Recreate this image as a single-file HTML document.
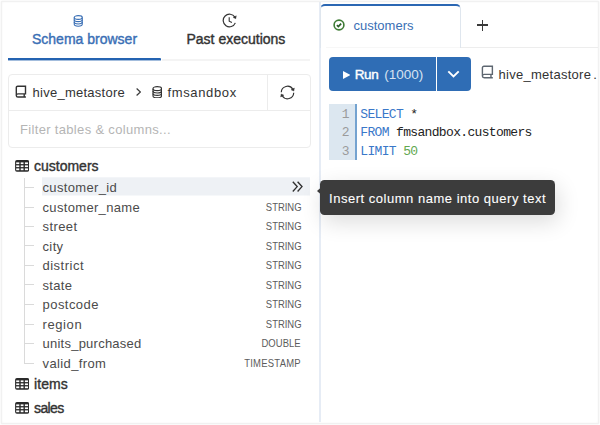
<!DOCTYPE html>
<html><head><meta charset="utf-8">
<style>
html,body{margin:0;padding:0;}
body{width:600px;height:425px;overflow:hidden;background:#fff;font-family:"Liberation Sans",sans-serif;color:#3a3a3a;position:relative;}
.abs{position:absolute;}
#frame{left:1px;top:1px;right:1px;bottom:1px;border:1px solid #f1f1f1;box-shadow:0 0 1.500px #ececec, inset 0 0 1.500px #ececec;z-index:50;pointer-events:none;}
.t{position:absolute;white-space:nowrap;line-height:1;font-size:14px;}
.sb{-webkit-text-stroke:0.4px currentColor;}
#vdiv{left:319px;top:2px;width:2px;height:420px;background:#e6ecf5;}
#ul1{left:8px;top:58px;width:153.300px;height:2px;background:#2463b1;border-bottom:1px solid #a3bddd;border-radius:0 1px 1px 0}
#ul2{left:162px;top:59px;width:148px;height:2px;background:#f4f4f4;}
#dbbox{left:7.500px;top:73.500px;width:301.500px;height:72.500px;border:1.300px solid #ececec;border-radius:4px;}
#dbsep{left:267px;top:74.500px;width:1.300px;height:35px;background:#ececec;}
#filter{left:8px;top:109.500px;width:301.500px;height:1.300px;background:#ececec;}
.row{position:absolute;left:42.500px;font-size:14px;color:#4b4b4b;white-space:nowrap;line-height:1;}
.typ{position:absolute;right:298.900px;font-size:11px;color:#5c5c5c;white-space:nowrap;line-height:1;transform:scaleX(0.860);transform-origin:100% 50%;}
.tick{position:absolute;left:24px;width:9.500px;height:1px;background:#dadada;}
.tbl{position:absolute;left:34px;font-size:14px;color:#333;line-height:1;white-space:nowrap;-webkit-text-stroke:0.38px #333;}
.code{font-family:"Liberation Mono",monospace;font-size:13px;letter-spacing:-0.660px;}
</style></head><body>
<div class="abs" id="vdiv"></div>

<!-- left tabs -->
<svg class="abs" style="left:72.800px;top:14.800px" width="10.500" height="11.900" viewBox="0 0 10.500 12.600" fill="none" stroke="#3a6fb5" stroke-width="1.150"><ellipse cx="5.250" cy="2.650" rx="4.250" ry="1.950"/><path d="M1 2.650V9.900c0 1.080 1.900 1.950 4.250 1.950s4.250-0.870 4.250-1.950V2.650"/><path d="M1 5.100c0 1.080 1.900 1.950 4.250 1.950s4.250-0.870 4.250-1.950"/><path d="M1 7.500c0 1.080 1.900 1.950 4.250 1.950s4.250-0.870 4.250-1.950"/></svg>
<div class="t sb" id="tab1" style="left:32px;top:31.900px;color:#3a6fb5;">Schema browser</div>
<svg class="abs" style="left:221.800px;top:13.450px" width="15" height="15" viewBox="0 0 15 15" fill="none" stroke="#333" stroke-width="1.200"><path d="M12.840 4.160A6.300 6.300 0 1 0 13.340 9.860"/><path d="M7.200 4.200V8.200L9.900 9.600" stroke-width="1.100"/><path d="M13.800 5.700l0.500-2.900-3.100 1.700z" fill="#333" stroke-width="0.400"/></svg>
<div class="t sb" id="tab2" style="left:186.500px;top:31.900px;color:#333;">Past executions</div>
<div class="abs" id="ul1"></div><div class="abs" id="ul2"></div>

<!-- db selector -->
<div class="abs" id="dbbox"></div><div class="abs" id="dbsep"></div>
<svg class="abs" style="left:15px;top:85.300px" width="12" height="13.500" viewBox="0 0 12 13.500" fill="none" stroke="#333" stroke-width="1.400"><path d="M1.300 10.600V2.600a1.400 1.400 0 0 1 1.400-1.400H10.500V8.900H3a1.700 1.550 0 0 0 0 3.100H10.900M9.200 8.900V12"/></svg>
<div class="t" id="hm" style="font-size:13px;letter-spacing:0.260px;left:32.500px;top:85.750px;color:#333">hive_metastore</div>
<svg class="abs" id="gt" style="left:136.300px;top:88.100px" width="5.200" height="8" viewBox="0 0 5.200 8" fill="none" stroke="#3a3a3a" stroke-width="1.200"><path d="M0.600 0.500l3.800 3.500-3.800 3.500"/></svg>
<svg class="abs" style="left:151.9px;top:85.5px" width="10.5" height="12.6" viewBox="0 0 10.500 12.600" fill="none" stroke="#333" stroke-width="1.150"><ellipse cx="5.250" cy="2.650" rx="4.250" ry="1.950"/><path d="M1 2.650V9.900c0 1.080 1.900 1.950 4.250 1.950s4.250-0.870 4.250-1.950V2.650"/><path d="M1 5.100c0 1.080 1.900 1.950 4.250 1.950s4.250-0.870 4.250-1.950"/><path d="M1 7.500c0 1.080 1.900 1.950 4.250 1.950s4.250-0.870 4.250-1.950"/></svg>
<div class="t" id="fm" style="font-size:13px;letter-spacing:0.630px;left:167.500px;top:85.750px;color:#333">fmsandbox</div>
<svg class="abs" style="left:280.100px;top:84.800px" width="15" height="15" viewBox="0 0 15 15" fill="none" stroke="#333" stroke-width="1.200"><path d="M1.300 7.280A6.200 6.200 0 0 1 12.760 4.210"/><path d="M13.700 7.720A6.200 6.200 0 0 1 2.240 10.790"/><path d="M13.800 6l0.500-2.900-3.100 1.700z" fill="#333" stroke-width="0.500"/><path d="M1.200 9l-0.500 2.900 3.100-1.700z" fill="#333" stroke-width="0.500"/></svg>
<div class="abs" id="filter"></div>
<div class="t" id="ft" style="font-size:13px;letter-spacing:0.330px;left:20px;top:123.250px;color:#b5b5b5">Filter tables &amp; columns...</div>

<!-- tree -->
<div class="abs" style="left:24px;top:178px;width:1px;height:185px;background:#dadada"></div>
<div class="abs" id="hl" style="left:42px;top:178px;width:267.700px;height:17px;background:#eef1f5"></div><div class="abs" style="left:42px;top:177px;width:267.700px;height:1px;background:#f3f5f8"></div><div class="abs" style="left:42px;top:195px;width:267.700px;height:1px;background:#f6f8fa"></div>

<svg class="abs" style="left:14.600px;top:160.000px" width="14.200" height="11.800" viewBox="0 0 14 11.800"><rect x="0" y="0" width="14" height="11.800" rx="1.800" fill="#2b2b2b"/><rect x="1.1" y="2.4" width="3.1" height="1.7" fill="#fff"/><rect x="5.6" y="2.4" width="2.8" height="1.7" fill="#fff"/><rect x="9.8" y="2.4" width="3.1" height="1.7" fill="#fff"/><rect x="1.1" y="5.4" width="3.1" height="1.7" fill="#fff"/><rect x="5.6" y="5.4" width="2.8" height="1.7" fill="#fff"/><rect x="9.8" y="5.4" width="3.1" height="1.7" fill="#fff"/><rect x="1.1" y="8.4" width="3.1" height="1.8" fill="#fff"/><rect x="5.6" y="8.4" width="2.8" height="1.8" fill="#fff"/><rect x="9.8" y="8.4" width="3.1" height="1.8" fill="#fff"/></svg>
<div class="tbl" id="t_c" style="top:158.650px">customers</div>

<div class="tick" style="top:186.500px"></div><div class="row" id="r1" style="font-size:13px;letter-spacing:0.340px;top:181.450px">customer_id</div>
<div class="tick" style="top:206.500px"></div><div class="row" id="r2" style="font-size:13px;letter-spacing:0.330px;top:200.950px">customer_name</div><div class="typ" style="top:201.850px">STRING</div>
<div class="tick" style="top:225.500px"></div><div class="row" id="r3" style="font-size:13px;letter-spacing:0.420px;top:220.450px">street</div><div class="typ" style="top:221.320px">STRING</div>
<div class="tick" style="top:245px"></div><div class="row" id="r4" style="font-size:13px;letter-spacing:0.370px;top:239.950px">city</div><div class="typ" style="top:240.790px">STRING</div>
<div class="tick" style="top:264.500px"></div><div class="row" id="r5" style="font-size:13px;letter-spacing:0.490px;top:259.450px">district</div><div class="typ" style="top:260.260px">STRING</div>
<div class="tick" style="top:284px"></div><div class="row" id="r6" style="font-size:13px;letter-spacing:0.320px;top:278.950px">state</div><div class="typ" style="top:279.730px">STRING</div>
<div class="tick" style="top:304px"></div><div class="row" id="r7" style="font-size:13px;letter-spacing:0.460px;top:298.450px">postcode</div><div class="typ" style="top:299.200px">STRING</div>
<div class="tick" style="top:323.500px"></div><div class="row" id="r8" style="font-size:13px;letter-spacing:0.600px;top:317.950px">region</div><div class="typ" style="top:318.670px">STRING</div>
<div class="tick" style="top:343px"></div><div class="row" id="r9" style="font-size:13px;letter-spacing:0.240px;top:337.450px">units_purchased</div><div class="typ" style="top:338.140px"><span style="letter-spacing:0.080px">DOUBLE</span></div>
<div class="tick" style="top:362.500px"></div><div class="row" id="r10" style="font-size:13px;letter-spacing:0.380px;top:356.950px">valid_from</div><div class="typ" style="top:357.610px" ><span style="letter-spacing:0.280px">TIMESTAMP</span></div>

<svg class="abs" style="left:292.300px;top:180.900px" width="11" height="11.200" viewBox="0 0 11 11.200" fill="none" stroke="#303030" stroke-width="1.350"><path d="M0.800 0.700l4.400 4.900-4.400 4.900M5.600 0.700l4.400 4.900-4.400 4.900"/></svg>

<svg class="abs" style="left:14.600px;top:378.000px" width="14.200" height="11.800" viewBox="0 0 14 11.800"><rect x="0" y="0" width="14" height="11.800" rx="1.800" fill="#2b2b2b"/><rect x="1.1" y="2.4" width="3.1" height="1.7" fill="#fff"/><rect x="5.6" y="2.4" width="2.8" height="1.7" fill="#fff"/><rect x="9.8" y="2.4" width="3.1" height="1.7" fill="#fff"/><rect x="1.1" y="5.4" width="3.1" height="1.7" fill="#fff"/><rect x="5.6" y="5.4" width="2.8" height="1.7" fill="#fff"/><rect x="9.8" y="5.4" width="3.1" height="1.7" fill="#fff"/><rect x="1.1" y="8.4" width="3.1" height="1.8" fill="#fff"/><rect x="5.6" y="8.4" width="2.8" height="1.8" fill="#fff"/><rect x="9.8" y="8.4" width="3.1" height="1.8" fill="#fff"/></svg>
<div class="tbl" id="t_i" style="top:376.700px;letter-spacing:0.100px">items</div>
<svg class="abs" style="left:14.600px;top:401.900px" width="14.200" height="11.800" viewBox="0 0 14 11.800"><rect x="0" y="0" width="14" height="11.800" rx="1.800" fill="#2b2b2b"/><rect x="1.1" y="2.4" width="3.1" height="1.7" fill="#fff"/><rect x="5.6" y="2.4" width="2.8" height="1.7" fill="#fff"/><rect x="9.8" y="2.4" width="3.1" height="1.7" fill="#fff"/><rect x="1.1" y="5.4" width="3.1" height="1.7" fill="#fff"/><rect x="5.6" y="5.4" width="2.8" height="1.7" fill="#fff"/><rect x="9.8" y="5.4" width="3.1" height="1.7" fill="#fff"/><rect x="1.1" y="8.4" width="3.1" height="1.8" fill="#fff"/><rect x="5.6" y="8.4" width="2.8" height="1.8" fill="#fff"/><rect x="9.8" y="8.4" width="3.1" height="1.8" fill="#fff"/></svg>
<div class="tbl" id="t_s" style="top:401px;letter-spacing:-0.600px">sales</div>

<!-- right: tabs -->
<div class="abs" style="left:461px;top:47px;width:137px;height:1px;background:#ededed"></div>
<div class="abs" style="left:326px;top:47px;width:134px;height:1px;background:#f7f7f7"></div>
<div class="abs" id="qtab" style="left:319.500px;top:3.800px;width:141.500px;height:44px;border:1px solid #dfe6ee;border-top:2px solid #2b67b3;border-bottom:none;border-radius:5px 5px 0 0;box-sizing:border-box"></div>
<svg class="abs" style="left:332.800px;top:19.450px" width="12" height="12" viewBox="0 0 12 12" fill="none"><circle cx="6" cy="6" r="4.900" stroke="#3f7d36" stroke-width="1.600"/><path d="M3.900 6.100l1.500 1.500 2.700-3" stroke="#2a5f27" stroke-width="1.700"/></svg>
<div class="t" id="qt" style="font-size:13px;letter-spacing:0.000px;left:353.500px;top:19.050px;color:#3a6fb5">customers</div>
<div class="abs" style="left:477px;top:24.400px;width:11px;height:1.200px;background:#3a3a3a"></div>
<div class="abs" style="left:481.900px;top:19.500px;width:1.200px;height:11px;background:#3a3a3a"></div>

<!-- run button -->
<div class="abs" id="run" style="left:328.800px;top:57.200px;width:107.400px;height:34px;background:#2f6db5;border-radius:4px 0 0 4px"></div>
<div class="abs" id="runr" style="left:437.200px;top:57.200px;width:34px;height:34px;background:#2f6db5;border-radius:0 4px 4px 0"></div>
<svg class="abs" style="left:342.500px;top:70.500px" width="7.500" height="8" viewBox="0 0 7.500 8"><path d="M0 0l7.500 4-7.500 4z" fill="#fff"/></svg>
<div class="t sb" id="runt" style="left:354.700px;top:67.600px;font-size:13.500px;color:#fff;letter-spacing:-0.400px">Run</div>
<div class="t" id="runn" style="left:384.300px;top:67.600px;font-size:13.500px;color:#d6e2f1">(1000)</div>
<svg class="abs" style="left:447px;top:70.300px" width="13" height="8" viewBox="0 0 13 8" fill="none" stroke="#fff" stroke-width="1.900"><path d="M1.300 1.300l5.200 5.200 5.200-5.200"/></svg>
<svg class="abs" style="left:480.500px;top:65.200px" width="13" height="14.300" viewBox="0 0 12 13.500" preserveAspectRatio="none" fill="none" stroke="#5d6670" stroke-width="1.300"><path d="M1.300 10.600V2.600a1.400 1.400 0 0 1 1.400-1.400H10.500V8.900H3a1.700 1.550 0 0 0 0 3.100H10.900M9.200 8.900V12"/></svg>
<div class="t" id="hm2" style="font-size:13px;letter-spacing:0.270px;left:498.500px;top:67.800px;color:#333">hive_metastore<span style="margin-left:2.200px">.</span></div>

<!-- editor -->
<div class="abs" style="left:329px;top:104.400px;width:26px;height:56px;background:#dce7f0"></div>
<div class="abs" style="left:355px;top:104.400px;width:2px;height:56px;background:#74a3d0"></div>
<div class="t code" style="left:341.800px;top:107.900px;color:#9b9b9b">1</div>
<div class="t code" style="left:341.800px;top:126.400px;color:#9b9b9b">2</div>
<div class="t code" style="left:341.800px;top:144.900px;color:#9b9b9b">3</div>
<div class="t code" id="c1" style="left:360.300px;top:107.900px;color:#222"><span style="color:#3a78c9">SELECT</span> *</div>
<div class="t code" id="c2" style="left:360.300px;top:126.400px;color:#222"><span style="color:#3a78c9">FROM</span> fmsandbox.customers</div>
<div class="t code" id="c3" style="left:360.300px;top:144.900px;color:#222"><span style="color:#3a78c9">LIMIT</span> <span style="color:#62a84f">50</span></div>

<!-- tooltip -->
<div class="abs" id="tip" style="left:320.300px;top:179.600px;width:235px;height:35px;background:#3c3c3c;border-radius:4.500px;box-shadow:3px 7px 22px rgba(0,0,0,0.140)"></div>
<svg class="abs" style="left:316.500px;top:187.300px" width="4.500" height="8" viewBox="0 0 4.500 8"><path d="M4.500 0v8L0 4z" fill="#3c3c3c"/></svg>
<div class="t" id="tipt" style="font-size:13px;letter-spacing:0.520px;left:329px;top:192.450px;color:#fff;-webkit-text-stroke:0.100px #fff">Insert column name into query text</div>

<div class="abs" id="frame"></div>
</body></html>
